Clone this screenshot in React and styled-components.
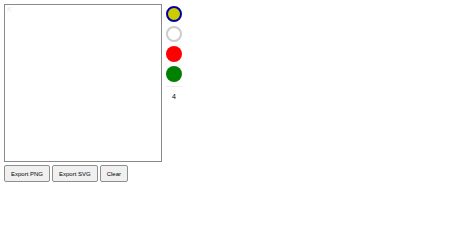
import React from 'react';
import styled, { createGlobalStyle } from 'styled-components';

const GlobalStyle = createGlobalStyle`
    html, body {
        margin: 0;
        padding: 0;
        background: #fff;
        font-family: "Liberation Sans", Arial, sans-serif;
    }
`;

const colors = [
    { fill: '#cccc00', ring: '#0000aa' },
    { fill: '#ffffff', ring: '#cccccc' },
    { fill: '#ff0000', ring: 'rgba(255,0,0,0.3)' },
    { fill: '#008000', ring: 'rgba(0,128,0,0.3)' },
];

export default function App() {
    return (
        <>
        <GlobalStyle />
        <Page>
            <Editor>
                <Board>
                    <Hint>⇱</Hint>
                </Board>
                <Palette>
                    {colors.map((c, i) => (
                        <Swatch key={i} $fill={c.fill} $ring={c.ring} />
                    ))}
                    <Divider />
                    <Size>4</Size>
                </Palette>
            </Editor>
            <Actions>
                <Button>Export PNG</Button>
                <Button>Export SVG</Button>
                <Button>Clear</Button>
            </Actions>
        </Page>
        </>
    );
}

const Page = styled.div`
    padding: 4px;
`;
const Editor = styled.div`
    display: flex;
    align-items: flex-start;
    gap: 4px;
`;
const Board = styled.div`
    position: relative;
    width: 156px;
    height: 156px;
    border: 1px solid #8a8a8a;
    background: #fff;
`;
const Hint = styled.span`
    position: absolute;
    left: 2px;
    top: 1px;
    font-size: 6px;
    color: #e2e2e2;
`;
const Palette = styled.div`
    display: flex;
    flex-direction: column;
    align-items: center;
    gap: 4px;
    padding-top: 2px;
    width: 16px;
`;
const Swatch = styled.div`
    width: 16px;
    height: 16px;
    box-sizing: border-box;
    border-radius: 50%;
    background: ${p => p.$fill};
    border: 2px solid ${p => p.$ring};
`;
const Divider = styled.div`
    width: 16px;
    height: 1px;
    background: #eeeeee;
`;
const Size = styled.div`
    font-size: 7px;
    color: #000;
    margin-top: 2px;
`;
const Actions = styled.div`
    display: flex;
    gap: 2px;
    margin-top: 3px;
`;
const Button = styled.button`
    font-family: "Liberation Sans", Arial, sans-serif;
    font-size: 6px;
    height: 17px;
    padding: 0 6px;
    background: #f0f0f0;
    border: 1px solid #8f8f8f;
    border-radius: 2px;
    color: #000;
`;
